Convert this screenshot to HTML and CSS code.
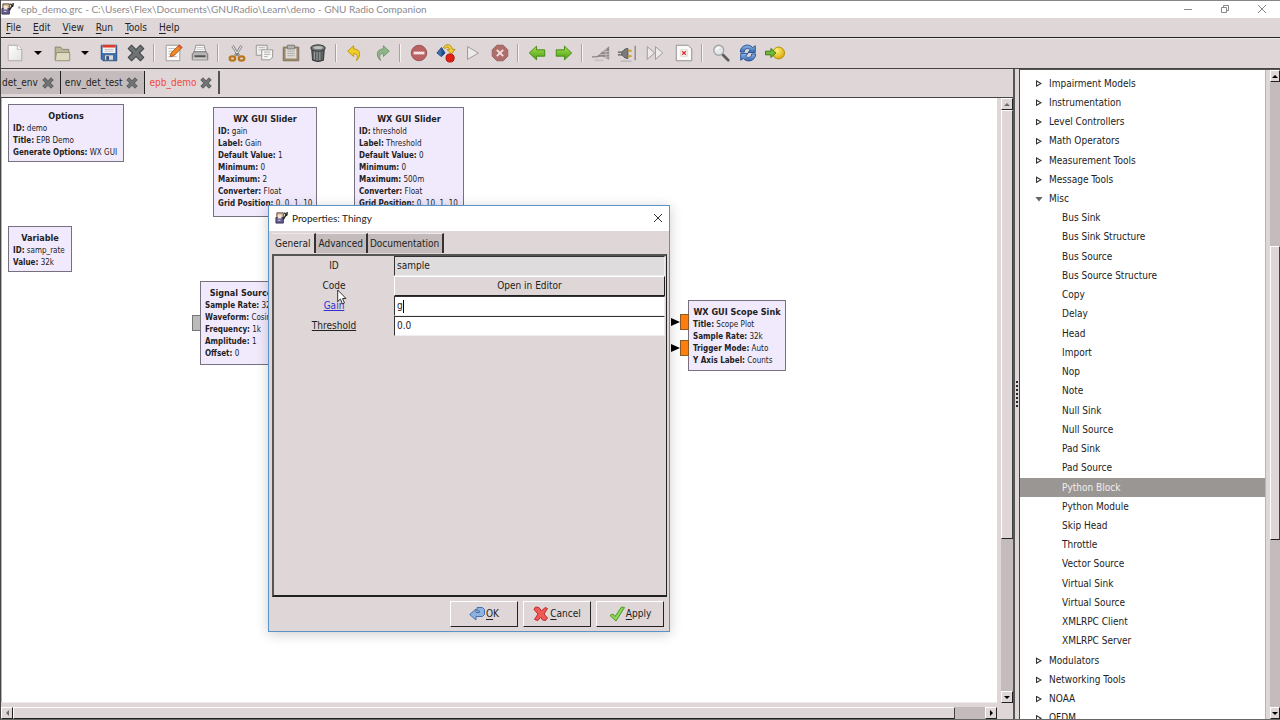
FILE: index.html
```html
<!DOCTYPE html>
<html lang="en">
<head>
<meta charset="utf-8">
<title>*epb_demo.grc - GNU Radio Companion</title>
<link rel="stylesheet" href="styles.css">
</head>
<body>
<svg class="defs" aria-hidden="true">
  <defs>
    <linearGradient id="gGreen" x1="0" y1="0" x2="0" y2="1"><stop offset="0" stop-color="#a5e052"/><stop offset="1" stop-color="#4a9e12"/></linearGradient>
    <linearGradient id="gPaper" x1="0" y1="0" x2="1" y2="1"><stop offset="0" stop-color="#fff"/><stop offset="1" stop-color="#e4e2e2"/></linearGradient>
    <linearGradient id="gBlue" x1="0" y1="0" x2="0" y2="1"><stop offset="0" stop-color="#8fb8e6"/><stop offset="1" stop-color="#3568ae"/></linearGradient>
    <radialGradient id="gBall" cx=".35" cy=".3" r=".8"><stop offset="0" stop-color="#fff27a"/><stop offset="1" stop-color="#d6a400"/></radialGradient>
    <pattern id="dim" width="2" height="2" patternUnits="userSpaceOnUse"><rect width="1" height="1" fill="#dfd7d7"/><rect x="1" y="1" width="1" height="1" fill="#dfd7d7"/></pattern>
    <symbol id="cross" viewBox="0 0 16 16"><path d="M1 4 4 1l4 4 4-4 3 3-4 4 4 4-3 3-4-4-4 4-3-3 4-4z" fill="#6f7374" stroke="#44484a" stroke-linejoin="round"/></symbol>
    <symbol id="app" viewBox="0 0 14 14"><path d="M2 2h7v7H2z" fill="#d8b98a" stroke="#5a4a44"/><path d="M1 7h8v6H1z" fill="#665a92" stroke="#3c3552"/><path d="M3 4h4v4H3z" fill="#f4e6d4"/><path d="M9 9 12 4M10 2l3 3M13 1v3" stroke="#222" stroke-width="1.500" fill="none"/><path d="M3 10h3" stroke="#ddd"/></symbol>
  </defs>
</svg>
<div class="window">
  <header class="titlebar">
    <svg class="app-icon" viewBox="0 0 14 14"><use href="#app"/></svg>
    <h1 class="title">*epb_demo.grc - C:\Users\Flex\Documents\GNURadio\Learn\demo - GNU Radio Companion</h1>
    <div class="controls">
      <button aria-label="Minimize"><svg viewBox="0 0 10 10"><path d="M1 5.500h8"/></svg></button>
      <button aria-label="Restore"><svg viewBox="0 0 10 10"><path d="M1.500 3.500h5v5h-5zM3.500 3V1.500h5v5H7"/></svg></button>
      <button aria-label="Close"><svg viewBox="0 0 10 10"><path d="m1 1 8 8M9 1 1 9"/></svg></button>
    </div>
  </header>
  <nav class="menubar">
    <button><u>F</u>ile</button><button><u>E</u>dit</button><button><u>V</u>iew</button><button><u>R</u>un</button><button><u>T</u>ools</button><button><u>H</u>elp</button>
  </nav>
  <div class="toolbar" role="toolbar">
    <button class="tool" aria-label="New"><svg viewBox="0 0 22 22"><path d="M3.500 2.500h10l5 4v13h-15z" fill="url(#gPaper)" stroke="#aaa5a5"/><path d="M13.500 2.500v4.500h5" fill="#fff" stroke="#b7b2b2"/></svg></button>
    <button class="drop" aria-label="New options"></button>
    <button class="tool" aria-label="Open"><svg viewBox="0 0 22 22"><path d="M3.500 18.500v-14h6l2 2.500h7v4" fill="#b9b699" stroke="#85826a"/><path d="M3.500 19.500 5 10.500h14.500v9z" fill="#dcdac0" stroke="#8e8b70"/></svg></button>
    <button class="drop" aria-label="Recent files"></button>
    <button class="tool" aria-label="Save"><svg viewBox="0 0 22 22"><path d="M2.500 2.500h17v17h-15l-2-2z" fill="#3b72b8" stroke="#244a80"/><path d="M4 2h14v9H4z" fill="#f8f8f8"/><path d="M4 2h14v3H4z" fill="#dc3b2c"/><path d="M6 7h10M6 9h10" stroke="#bbb"/><path d="M6 13h10v6H6z" fill="#d9dcdf" stroke="#46617f"/><path d="M8 14.500h3v4H8z" fill="#2f4d78"/></svg></button>
    <button class="tool" aria-label="Close"><svg viewBox="-1 -1 18 18"><use href="#cross" width="16" height="16"/></svg></button>
    <span class="sep"></span>
    <button class="tool" aria-label="Edit"><svg viewBox="0 0 22 22"><path d="M3.500 2.500h15v17h-15z" fill="#fbfbfa" stroke="#999595"/><path d="M6 6h8M6 9h6M6 12h4M6 15h9" stroke="#b5b5b5"/><path d="m8 15 1-4 9-9 3 3-9 9z" fill="#f08a24" stroke="#a5541b"/><path d="m16.500 3.500 3 3L21 5l-3-3z" fill="#e05144"/></svg></button>
    <button class="tool" aria-label="Print"><svg viewBox="0 0 22 22"><path d="M6.500 2.500h9l2 8h-13z" fill="#fff" stroke="#888"/><path d="M7 5h8M7 7h9" stroke="#c4c4c4"/><path d="m2.500 12.500 2-3h13l2 3v6h-17z" fill="#b6b4b4" stroke="#6c6a6a"/><path d="M5 14.500h12" stroke="#555" stroke-width="2"/><path d="M3 17.500h16" stroke="#e8e6e6"/></svg></button>
    <span class="sep"></span>
    <button class="tool" aria-label="Cut"><svg viewBox="0 0 22 22"><path d="m6 3 7 11M16 3 9 14" stroke="#8b8d8e" stroke-width="3"/><path d="m6 3 6 10M16 3l-6 10" stroke="#eee" /><ellipse cx="6" cy="17" rx="3" ry="2.300" fill="none" stroke="#b9761c" stroke-width="2.500"/><ellipse cx="16" cy="17" rx="3" ry="2.300" fill="none" stroke="#b9761c" stroke-width="2.500"/><circle cx="11" cy="12" r="1" fill="#555"/></svg></button>
    <button class="tool" aria-label="Copy"><svg viewBox="0 0 22 22"><path d="M2.500 2.500h12v11h-12z" fill="#efedec" stroke="#938f8f"/><path d="M5 5h7M5 7.500h7" stroke="#bbb"/><path d="M8.500 7.500h12v8l-3 3h-9z" fill="#f7f6f6" stroke="#938f8f"/><path d="M11 10h7M11 12.500h7M11 15h4" stroke="#aaa"/></svg></button>
    <button class="tool" aria-label="Paste"><svg viewBox="0 0 22 22"><path d="M2.500 4.500h17v15h-17z" fill="#8e774d" stroke="#5f543c"/><path d="M5 6h12v11H5z" fill="#e0dddb"/><path d="M7 9h8M7 11.500h8M7 14h8" stroke="#999"/><path d="M7 2.500h8v4H7z" fill="#aaa" stroke="#605d5a"/><path d="M2 2h18v18H2z" fill="url(#dim)" opacity=".4"/></svg></button>
    <button class="tool" aria-label="Delete"><svg viewBox="0 0 22 22"><path d="M4 6h14l-1 13q-6 3-12 0z" fill="#5a5e5e" stroke="#2d3030"/><path d="M7 9v9M10 9v10M13 9v10" stroke="#a5a9a8"/><ellipse cx="11" cy="5.500" rx="8" ry="3.500" fill="#777b7b" stroke="#303333"/><ellipse cx="11" cy="5" rx="5" ry="1.700" fill="#bdc0c0"/></svg></button>
    <span class="sep"></span>
    <button class="tool" aria-label="Undo"><svg viewBox="0 0 22 22"><path d="m3 9 6.500-6v3.500c8 0 8.500 8 3 13 2-5 1-8-3-8V15z" fill="#f0ce27" stroke="#bb9605"/></svg></button>
    <button class="tool" aria-label="Redo"><svg viewBox="0 0 22 22"><path d="m19 9-6.500-6v3.500c-8 0-8.500 8-3 13-2-5-1-8 3-8V15z" fill="#73a66b" stroke="#4d7e4c"/><path d="M2 2h18v18H2z" fill="url(#dim)" opacity=".5"/></svg></button>
    <span class="sep"></span>
    <button class="tool" aria-label="Errors"><svg viewBox="0 0 22 22"><circle cx="11" cy="11" r="8.500" fill="#b4484a" stroke="#873337"/><path d="M2 2h18v18H2z" fill="url(#dim)" opacity=".35"/><path d="M5 9.500h12v3H5z" fill="#f3e5e4"/></svg></button>
    <button class="tool" aria-label="Generate"><svg viewBox="0 0 22 22"><path d="m1 11 5-6 4 6-4 4z" fill="#3f6fb3" stroke="#24467c"/><path d="m6 5 4 6-4 4z" fill="#234b8a"/><path d="M8 5c3-5 9-4 10 2h3l-4 5-5-5h3c-1-3-4-3-5-1z" fill="#f1ce34" stroke="#b48d12"/><circle cx="15.500" cy="16.500" r="4.500" fill="#e12013" stroke="#a80e08"/></svg></button>
    <button class="tool" aria-label="Execute"><svg viewBox="0 0 22 22"><path d="m5 4 12 7-12 7z" fill="#eeeaea" stroke="#999494"/></svg></button>
    <button class="tool" aria-label="Kill"><svg viewBox="0 0 22 22"><path d="M7.500 2.500h7l5 5v7l-5 5h-7l-5-5v-7z" fill="#a45350" stroke="#81423e"/><path d="M2 2h18v18H2z" fill="url(#dim)" opacity=".4"/><path d="m7.500 7.500 7 7m0-7-7 7" stroke="#f1e5e4" stroke-width="2"/></svg></button>
    <span class="sep"></span>
    <button class="tool" aria-label="Back"><svg viewBox="0 0 22 22"><path d="m2.500 11 8-7.500v4h9v7h-9v4z" fill="url(#gGreen)" stroke="#3e8710"/></svg></button>
    <button class="tool" aria-label="Forward"><svg viewBox="0 0 22 22"><path d="m19.500 11-8-7.500v4h-9v7h9v4z" fill="url(#gGreen)" stroke="#3e8710"/></svg></button>
    <span class="sep"></span>
    <button class="tool" aria-label="Enable"><svg viewBox="0 0 22 22"><path d="M1 14.500h4c4 0 5-4 9-6l6-5v15l-6-3c-3-1-5 0-9 .5H1z" fill="#8c8886"/><path d="M10 12.500h10M13 9.500h7M15 15.500h5M16.500 6v11" stroke="#c9c2c1"/><path d="M4 19h10" stroke="#cac2c2" stroke-width="2"/></svg></button>
    <button class="tool narrow" aria-label="Disable"><svg viewBox="0 0 22 22"><path d="M1 10h5M1 13h5" stroke="#555" stroke-width="1.500"/><path d="M5 11.500Q7 6 12 6v11q-5 0-7-5.500z" fill="#777b7b" stroke="#555"/><path d="M12 8.500h4M12 14.500h4" stroke="#c79d27" stroke-width="2"/><path d="M20 3v16" stroke="#8a8585" stroke-width="1.500"/><path d="M4 20h12" stroke="#c4bcbc" stroke-width="2"/></svg></button>
    <button class="tool wide" aria-label="Bypass"><svg viewBox="0 0 22 22"><path d="m2.500 4 8 7-8 7zM11.500 4l8 7-8 7z" fill="#eeeaea" stroke="#999494"/></svg></button>
    <button class="tool" aria-label="Disconnect"><svg viewBox="0 0 22 22"><path d="M2.500 2.500h13l4 4v13h-17z" fill="#fafafa" stroke="#8d8989"/><path d="M7.500 7.500h7v7h-7z" fill="#fff" stroke="#dcc"/><path d="m9 9 4 4m0-4-4 4" stroke="#d82f2f" stroke-width="1.500"/></svg></button>
    <span class="sep"></span>
    <button class="tool" aria-label="Find"><svg viewBox="0 0 22 22"><path d="m13 13 6 6" stroke="#5c5c5c" stroke-width="3" stroke-linecap="round"/><circle cx="8.500" cy="8" r="5.500" fill="#e3e8ec" stroke="#a5a3a3" stroke-width="1.500"/><path d="M5.500 8q1-3 4-3" stroke="#fff" fill="none" stroke-width="1.500"/></svg></button>
    <button class="tool" aria-label="Reload"><svg viewBox="0 0 22 22"><path d="M2.500 10c0-8 10-10 13.500-5l3-2v7.500h-8l2.500-3C11 5 7 6 7 10z" fill="url(#gBlue)" stroke="#244f91"/><path d="M19.500 12c0 8-10 10-13.500 5l-3 2v-7.500h8l-2.500 3c2.500 2.500 6.500 1.500 6.500-2.500z" fill="url(#gBlue)" stroke="#244f91"/></svg></button>
    <button class="tool" aria-label="Go"><svg viewBox="0 0 22 22"><circle cx="15" cy="11" r="6.500" fill="url(#gBall)" stroke="#b18a00"/><path d="M.5 9h6V6l5.500 5-5.500 5v-3h-6z" fill="#72bd37" stroke="#37700f"/></svg></button>
  </div>
  <main class="main">
    <section class="editor">
      <div class="tabs" role="tablist">
        <button class="tab" role="tab">det_env <svg viewBox="0 0 16 16"><use href="#cross"/></svg></button>
        <button class="tab" role="tab">env_det_test <svg viewBox="0 0 16 16"><use href="#cross"/></svg></button>
        <button class="tab active" role="tab" aria-selected="true">epb_demo <svg viewBox="0 0 16 16"><use href="#cross"/></svg></button>
      </div>
      <div class="canvas-area">
        <div class="canvas">
          <article class="node n-options"><h2>Options</h2><p><b>ID:</b> demo</p><p><b>Title:</b> EPB Demo</p><p><b>Generate Options:</b> WX GUI</p></article>
          <article class="node n-variable"><h2>Variable</h2><p><b>ID:</b> samp_rate</p><p><b>Value:</b> 32k</p></article>
          <article class="node n-gain"><h2>WX GUI Slider</h2><p><b>ID:</b> gain</p><p><b>Label:</b> Gain</p><p><b>Default Value:</b> 1</p><p><b>Minimum:</b> 0</p><p><b>Maximum:</b> 2</p><p><b>Converter:</b> Float</p><p><b>Grid Position:</b> 0, 0, 1, 10</p></article>
          <article class="node n-threshold"><h2>WX GUI Slider</h2><p><b>ID:</b> threshold</p><p><b>Label:</b> Threshold</p><p><b>Default Value:</b> 0</p><p><b>Minimum:</b> 0</p><p><b>Maximum:</b> 500m</p><p><b>Converter:</b> Float</p><p><b>Grid Position:</b> 0, 10, 1, 10</p></article>
          <article class="node n-signal"><h2>Signal Source</h2><p><b>Sample Rate:</b> 32k</p><p><b>Waveform:</b> Cosine</p><p><b>Frequency:</b> 1k</p><p><b>Amplitude:</b> 1</p><p><b>Offset:</b> 0</p><i class="port off"></i></article>
          <article class="node n-scope"><h2>WX GUI Scope Sink</h2><p><b>Title:</b> Scope Plot</p><p><b>Sample Rate:</b> 32k</p><p><b>Trigger Mode:</b> Auto</p><p><b>Y Axis Label:</b> Counts</p><i class="port in1"></i><i class="port in2"></i></article>
        </div>
        <div class="vbar"><span class="step up dim"></span><span class="thumb"></span><span class="trough"></span><span class="step down"></span></div>
        <div class="hbar"><span class="step left dim"></span><span class="thumb"></span><span class="trough"></span><span class="step right"></span></div>
      </div>
    </section>
    <div class="handle"></div>
    <aside class="library">
      <div class="tree-clip">
      <ul class="tree" role="tree">
        <li class="group">Impairment Models</li><li class="group">Instrumentation</li><li class="group">Level Controllers</li><li class="group">Math Operators</li><li class="group">Measurement Tools</li><li class="group">Message Tools</li><li class="group open">Misc</li>
        <li>Bus Sink</li><li>Bus Sink Structure</li><li>Bus Source</li><li>Bus Source Structure</li><li>Copy</li><li>Delay</li><li>Head</li><li>Import</li><li>Nop</li><li>Note</li><li>Null Sink</li><li>Null Source</li><li>Pad Sink</li><li>Pad Source</li><li class="selected">Python Block</li><li>Python Module</li><li>Skip Head</li><li>Throttle</li><li>Vector Source</li><li>Virtual Sink</li><li>Virtual Source</li><li>XMLRPC Client</li><li>XMLRPC Server</li>
        <li class="group">Modulators</li><li class="group">Networking Tools</li><li class="group">NOAA</li><li class="group">OFDM</li>
      </ul>
      </div>
      <div class="vbar lib"><span class="step up"></span><span class="trough"></span><span class="thumb"></span><span class="trough end"></span><span class="step down"></span></div>
    </aside>
  </main>
</div>
<form class="dialog" role="dialog" aria-labelledby="dlg-title">
  <header class="dlg-title">
    <svg class="app-icon" viewBox="0 0 14 14"><use href="#app"/></svg>
    <h2 id="dlg-title">Properties: Thingy</h2>
    <button type="button" aria-label="Close"><svg viewBox="0 0 10 10"><path d="m1 1 8 8M9 1 1 9"/></svg></button>
  </header>
  <div class="dlg-tabs" role="tablist">
    <button type="button" class="active" role="tab" aria-selected="true">General</button><button type="button" role="tab">Advanced</button><button type="button" role="tab">Documentation</button>
  </div>
  <div class="dlg-panel">
    <div class="row"><label for="f-id">ID</label><input id="f-id" value="sample" readonly></div>
    <div class="row"><span class="label">Code</span><button type="button" class="open-editor">Open in Editor</button></div>
    <div class="row"><label for="f-gain" class="changed">Gain</label><span class="caret-field"><input id="f-gain" value="g"></span></div>
    <div class="row"><label for="f-thr" class="param">Threshold</label><input id="f-thr" value="0.0"></div>
  </div>
  <footer class="dlg-actions">
    <button type="button"><svg viewBox="0 0 16 16"><path d="M.7 8.500 7 3v3.500h3.500V5H8V1.500h5.500l2 2v5l-2 2H7V14z" fill="#8db2e2" stroke="#436fae"/></svg><span><u>O</u>K</span></button>
    <button type="button"><svg viewBox="0 0 16 16"><path d="m2.500 1 3.500.5L8.500 5 12 1.500l2.500 1L11 8l3.500 4-2 2.500-3-.5L7.500 11 5 14.500l-3.500-1L5 8 1 3.500z" fill="#ee5a54" stroke="#c0272a"/></svg><span><u>C</u>ancel</span></button>
    <button type="button"><svg viewBox="0 0 16 16"><path d="m1 9.500 3-1.500 2 2.500L12.500 1l3 .5L7 15z" fill="#8ed45b" stroke="#4c9a25"/></svg><span><u>A</u>pply</span></button>
  </footer>
  <svg class="cursor" viewBox="0 0 10 16"><path d="M.7 1v11.500l2.700-2.500L5.500 15l2-1-2-4.500H9z" fill="#fff" stroke="#333"/></svg>
</form>
</body>
</html>
```
FILE: styles.css
```css
* { box-sizing: border-box; }
html, body { height: 100%; margin: 0; }
body { font: 10px/16px "DejaVu Sans Condensed", "DejaVu Sans", sans-serif; color: #222; background: #dfd7d7; overflow: hidden; position: relative; }
h1, h2, p, ul { margin: 0; padding: 0; font-size: inherit; font-weight: inherit; }
button, input { font: inherit; color: inherit; margin: 0; padding: 0; border: 0; background: none; border-radius: 0; white-space: nowrap; }
svg { display: block; }
.defs { position: absolute; width: 0; height: 0; }
.window { height: 100%; display: flex; flex-direction: column; border-left: 1px solid #444; border-bottom: 1px solid #666; }

.titlebar { flex: none; height: 18px; display: flex; align-items: center; gap: 3px; padding-bottom: 2px; background: #fff; border-top: 1px solid #8a8589; color: #8c8a8e; font-family: Lato, sans-serif; }
.app-icon { width: 13px; height: 13px; flex: none; }
.title { flex: 1; white-space: nowrap; }
.controls { display: flex; gap: 27px; padding-right: 13px; }
.controls button, .dlg-title button { width: 10px; height: 10px; }
.controls svg, .dlg-title button svg { width: 10px; height: 10px; fill: none; stroke: #888; }

.menubar { flex: none; height: 20px; display: flex; gap: 12px; padding-left: 5px; padding-top: 1px; border-bottom: 1px solid #222; }
u { text-underline-offset: 2px; }

.toolbar { flex: none; height: 31px; display: flex; align-items: center; padding-bottom: 1px; border-bottom: 1px solid #444; border-top: 1px solid #f0ebeb; }
.tool { width: 27px; height: 24px; display: grid; place-items: center; }
.tool.narrow { width: 25px; }
.tool.wide { width: 31px; }
.tool svg { width: 20px; height: 20px; }
.drop { width: 20px; height: 20px; display: grid; place-items: center; }
.drop::before { content: ""; border: 4px solid transparent; border-top-color: #000; border-bottom: 0; }
.sep { width: 2px; height: 18px; margin: 0 4px; border-left: 1px solid #aaa2a2; border-right: 1px solid #f7f3f3; }

.main { flex: 1; min-height: 0; display: flex; }
.editor { flex: 1; min-width: 0; display: flex; flex-direction: column; }
.tabs { flex: none; height: 29px; display: flex; padding-top: 2px; padding-bottom: 3px; border-bottom: 1px solid #444; }
.tab { display: flex; align-items: center; gap: 4px; padding: 0 6px 0 4px; background: #c4bcbc; border-right: 1px solid #222; }
.tab:first-child { padding-left: 1px; }
.tab.active { background: #dfd7d7; color: #ef4a42; border-right: 2px solid #555; }
.tab svg { width: 12px; height: 12px; }
.canvas-area { flex: 1; min-height: 0; display: grid; grid-template-columns: 1fr 12px; grid-template-rows: 1fr 12px; gap: 4px; }
.canvas { position: relative; overflow: hidden; background: #fff; border-left: 1px solid #bbb3b3; border-bottom: 1px solid #efeaea; }

.node { position: absolute; background: #f1eafd; border: 1px solid #77717f; padding: 4px; font: 8px/12px "DejaVu Sans Condensed", "DejaVu Sans", sans-serif; white-space: nowrap; }
.node h2 { font-size: 9px; line-height: 14px; font-weight: bold; text-align: center; }
.n-options { left: 6px; top: 6px; width: 116px; height: 58px; }
.n-variable { left: 6px; top: 128px; width: 64px; height: 46px; }
.n-gain { left: 211px; top: 9px; width: 104px; height: 110px; }
.n-threshold { left: 352px; top: 9px; width: 110px; height: 110px; }
.n-signal { left: 198px; top: 183px; width: 82px; height: 84px; }
.n-scope { left: 686px; top: 202px; width: 98px; height: 71px; }
.port { position: absolute; left: -9px; width: 9px; height: 16px; background: #ff7f0e; border: 1px solid #8a5a28; }
.port.off { top: 33px; background: #bbb; border-color: #777; }
.in1 { top: 13px; }
.in2 { top: 39px; }
.in1::before, .in2::before { content: ""; position: absolute; right: 8px; top: 3px; border: 4px solid transparent; border-left: 9px solid #000; border-right: 0; }

.vbar { display: flex; flex-direction: column; background: #c4bcbc; }
.hbar { display: flex; background: #c4bcbc; }
.step { flex: 0 0 12px; display: grid; place-items: center; background: #dfd7d7; border: 1px solid; border-color: #fff #222 #222 #fff; }
.step::before { content: ""; border: 3px solid transparent; }
.up::before { border-bottom-color: #000; border-top: 0; }
.down::before { border-top-color: #000; border-bottom: 0; }
.left::before { border-right-color: #000; border-left: 0; }
.right::before { border-left-color: #000; border-right: 0; }
.dim::before { opacity: .5; }
.thumb { background: #dfd7d7; border: 1px solid; border-color: #fff #444 #222 #fff; }
.vbar .thumb { flex: 431; }
.vbar .trough { flex: 154; }
.hbar .thumb { flex: 942; }
.hbar .trough { flex: 30; }
.vbar.lib { flex: none; width: 10px; margin-left: 4px; }
.lib .trough { flex: 165; }
.lib .thumb { flex: 294; }
.lib .trough.end { flex: 168; }

.handle { flex: none; width: 7px; border-left: 2px solid #555; border-right: 1px solid #444; display: flex; align-items: center; }
.handle::before { content: ""; width: 2px; height: 27px; margin-left: 1px; background: repeating-linear-gradient(#222 0 2px, #dfd7d7 2px 4px); }
.library { flex: none; width: 260px; display: flex; border-top: 1px solid #555; }
.tree-clip { flex: 1; overflow: hidden; background: #fff; padding-top: 4px; border-right: 1px solid #bbb3b3; }
.tree { list-style: none; height: calc(100% + 9px); display: flex; flex-direction: column; }
.tree li { flex: 1; display: flex; align-items: center; padding-left: 42px; min-height: 0; white-space: nowrap; }
.tree li.group { padding-left: 16px; }
.tree li.group::before { content: ""; width: 6px; height: 7px; margin-right: 7px; background: #333; clip-path: polygon(evenodd, 0 0, 100% 50%, 0 100%, 0 0, 1px 2px, 1px 5px, 4px 50%, 1px 2px); }
.tree li.open::before { height: 5px; width: 8px; margin: 0 6px 0 -1px; clip-path: polygon(0 0, 100% 0, 50% 100%); background: #666; }
.tree li.selected { background: #9a9693; color: #f2eeee; }

.dialog { position: absolute; left: 268px; top: 205px; width: 402px; height: 427px; display: flex; flex-direction: column; padding: 0 2px 4px 3px; background: #dfd7d7; border: 1px solid #5b93c8; box-shadow: 0 2px 12px #0003; }
.dlg-title { flex: none; height: 25px; display: flex; align-items: center; gap: 4px; margin: 0 -2px 0 -3px; padding: 0 6px 2px 6px; background: #fff; font-family: Lato, sans-serif; }
.dlg-title h2 { flex: 1; }
.dlg-title button svg { stroke: #333; }
.dlg-tabs { flex: none; display: flex; height: 23px; padding-top: 2px; }
.dlg-tabs button { height: 20px; padding: 0 3px 0 2px; background: #c4bcbc; border-right: 2px solid #333; border-top: 1px solid #eee8e8; }
.dlg-tabs .active { background: #dfd7d7; padding: 0 4px 0 3px; }
.dlg-panel { flex: 1; border: 2px solid; border-color: #555 #222 #222 #555; border-right-width: 1px; padding-right: 1px; }
.row { display: grid; grid-template-columns: 120px 1fr; height: 20px; align-items: stretch; }
.row label, .row .label { text-align: center; line-height: 20px; }
.row input { width: 100%; height: 100%; min-width: 0; background: #fff; padding: 0 0 1px 2px; border: 1px solid; border-color: #333 #eee #eee #333; outline: 0; }
.row input[readonly] { background: #dedcdd; }
.open-editor { border: 1px solid; border-color: #fff #222 #222 #fff; }
.changed { color: #3230d0; text-decoration: underline; }
.param { text-decoration: underline; }
.caret-field { position: relative; }
.caret-field::after { content: ""; position: absolute; left: 9px; top: 4px; width: 1px; height: 13px; background: #000; }
.dlg-actions { flex: none; display: flex; justify-content: flex-end; gap: 5px; padding: 4px 3px 0 0; }
.dlg-actions button { width: 68px; height: 26px; display: flex; align-items: center; justify-content: center; gap: 1px; border: 1px solid; border-color: #fff #222 #222 #fff; }
.dlg-actions svg { width: 16px; height: 16px; }
.cursor { position: absolute; left: 68px; top: 83px; width: 10px; height: 16px; }
```
